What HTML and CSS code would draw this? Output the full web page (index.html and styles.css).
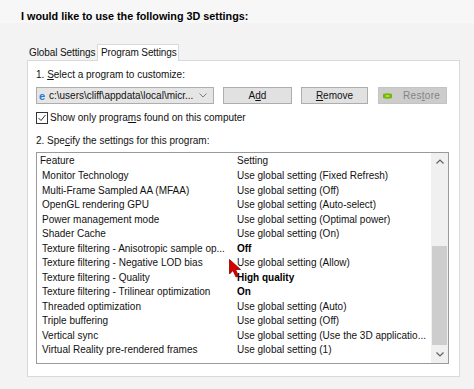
FILE: index.html
```html
<!DOCTYPE html>
<html lang="en">
<head>
    <meta charset="UTF-8">
    <meta name="viewport" content="width=device-width, initial-scale=1.0">
    <title>3D Settings</title>
    <link rel="stylesheet" href="styles.css">
</head>
<body>
    <div class="title">I would like to use the following 3D settings:</div>

    <div class="tabs">
        <div class="tab">Global Settings</div>
        <div class="tab active">Program Settings</div>
    </div>

    <div class="panel">
        <div class="label">1. <u>S</u>elect a program to customize:</div>

        <div class="program-row">
            <div class="select">
                <span class="ie">e</span>
                <span class="select-text">c:\users\cliff\appdata\local\micr...</span>
                <svg class="chevron" width="8" height="5" viewBox="0 0 8 5">
                    <path d="M0.5 0.5 L4 4 L7.5 0.5" fill="none" stroke="#7a7a7a" stroke-width="1"/>
                </svg>
            </div>
            <button class="btn add">A<u>d</u>d</button>
            <button class="btn remove"><u>R</u>emove</button>
            <button class="btn restore" disabled>
                <svg class="nv" width="9" height="6" viewBox="0 0 9 6">
                    <path d="M0 1 Q4.5 -0.5 9 1 L9 5 Q4.5 6.5 0 5 Z" fill="#76b900"/>
                    <path d="M2 3 Q4.5 1.5 7 3 Q4.5 4.5 2 3 Z" fill="#cfe89a"/>
                </svg>
                Res<u>t</u>ore
            </button>
        </div>

        <label class="check-row">
            <span class="checkbox">
                <svg width="10" height="10" viewBox="0 0 10 10">
                    <path d="M1.5 5 L4 7.5 L8.5 2" fill="none" stroke="#333" stroke-width="1"/>
                </svg>
            </span>
            Show only progra<u>m</u>s found on this computer
        </label>

        <div class="label second">2. Spe<u>c</u>ify the settings for this program:</div>

        <div class="list">
            <div class="list-body">
                <div class="list-head">
                    <span>Feature</span>
                    <span>Setting</span>
                </div>
                <div class="list-row"><span>Monitor Technology</span><span>Use global setting (Fixed Refresh)</span></div>
                <div class="list-row"><span>Multi-Frame Sampled AA (MFAA)</span><span>Use global setting (Off)</span></div>
                <div class="list-row"><span>OpenGL rendering GPU</span><span>Use global setting (Auto-select)</span></div>
                <div class="list-row"><span>Power management mode</span><span>Use global setting (Optimal power)</span></div>
                <div class="list-row"><span>Shader Cache</span><span>Use global setting (On)</span></div>
                <div class="list-row"><span>Texture filtering - Anisotropic sample op...</span><span class="set">Off</span></div>
                <div class="list-row"><span>Texture filtering - Negative LOD bias</span><span>Use global setting (Allow)</span></div>
                <div class="list-row"><span>Texture filtering - Quality</span><span class="set">High quality</span></div>
                <div class="list-row"><span>Texture filtering - Trilinear optimization</span><span class="set">On</span></div>
                <div class="list-row"><span>Threaded optimization</span><span>Use global setting (Auto)</span></div>
                <div class="list-row"><span>Triple buffering</span><span>Use global setting (Off)</span></div>
                <div class="list-row"><span>Vertical sync</span><span>Use global setting (Use the 3D applicatio...</span></div>
                <div class="list-row"><span>Virtual Reality pre-rendered frames</span><span>Use global setting (1)</span></div>
            </div>
            <div class="scrollbar">
                <div class="scroll-btn">
                    <svg width="8" height="5" viewBox="0 0 8 5">
                        <path d="M0.5 4.5 L4 1 L7.5 4.5" fill="none" stroke="#606060" stroke-width="1.2"/>
                    </svg>
                </div>
                <div class="scroll-track">
                    <div class="scroll-thumb"></div>
                </div>
                <div class="scroll-btn">
                    <svg width="8" height="5" viewBox="0 0 8 5">
                        <path d="M0.5 0.5 L4 4 L7.5 0.5" fill="none" stroke="#606060" stroke-width="1.2"/>
                    </svg>
                </div>
            </div>
        </div>
    </div>

    <!-- mouse pointer over the list -->
    <svg class="cursor" width="13" height="19" viewBox="0 0 13 19">
        <path d="M0.5 0.5 L0.5 15 L4 11.5 L7 18 L9.5 17 L6.5 10.5 L11.5 10.5 Z" fill="#d40000" stroke="#8a0000" stroke-width="0.8"/>
    </svg>
</body>
</html>
```

FILE: styles.css
```css
* {
    margin: 0;
    padding: 0;
    box-sizing: border-box;
}

body {
    font-family: "Liberation Sans", Arial, sans-serif;
    font-size: 10px;
    color: #111;
    background: #f3f3f3;
    width: 474px;
    height: 389px;
    position: relative;
    overflow: hidden;
}

.title {
    font-size: 10.8px;
    font-weight: bold;
    line-height: 14px;
    padding: 9px 0 0 21px;
    height: 23px;
    background: #f7f7f7;
    color: #000;
}

.tabs {
    display: flex;
    align-items: flex-end;
    margin: 21px 0 0 28px;
    height: 16px;
    position: relative;
    z-index: 1;
    white-space: nowrap;
}

.tab {
    height: 14px;
    line-height: 13px;
    width: 69px;
    padding-left: 1px;
    letter-spacing: -0.1px;
}

.tab.active {
    height: 17px;
    width: 82px;
    margin-bottom: -1px;
    padding-left: 3px;
    line-height: 15px;
    background: #fff;
    border: 1px solid #d9d9d9;
    border-bottom: none;
}

.panel {
    margin-left: 27px;
    width: 433px;
    height: 317px;
    background: #fff;
    border: 1px solid #d9d9d9;
    padding: 7px 0 0 8px;
}

.label {
    line-height: 14px;
    height: 14px;
}

.label.second {
    margin-top: 9px;
}

.program-row {
    display: flex;
    margin-top: 5px;
    height: 17px;
}

.select {
    width: 178px;
    height: 17px;
    background: #e5e5e5;
    border: 1px solid #adadad;
    display: flex;
    align-items: center;
    padding-left: 2px;
}

.ie {
    color: #1e7ad6;
    font-weight: bold;
    font-size: 11px;
    width: 10px;
    line-height: 12px;
}

.select-text {
    flex: 1;
    white-space: nowrap;
}

.chevron {
    margin-right: 6px;
}

.btn {
    font-family: inherit;
    font-size: 10px;
    color: #111;
    height: 17px;
    background: #e1e1e1;
    border: 1px solid #adadad;
    display: flex;
    align-items: center;
    justify-content: center;
}

.add {
    width: 69px;
    margin-left: 9px;
}

.remove {
    width: 67px;
    margin-left: 9px;
}

.restore {
    width: 69px;
    margin-left: 10px;
    background: #cccccc;
    border-color: #c4c4c4;
    color: #848484;
    justify-content: flex-start;
    padding-left: 4px;
    letter-spacing: 0.3px;
}

.nv {
    margin-right: 11px;
}

.check-row {
    display: flex;
    align-items: center;
    margin-top: 7px;
    height: 14px;
    line-height: 14px;
}

.checkbox {
    width: 12px;
    height: 12px;
    border: 1px solid #333;
    background: #fff;
    margin-right: 2px;
    display: flex;
    align-items: center;
    justify-content: center;
}

.list {
    margin-top: 4px;
    width: 413px;
    height: 212px;
    border: 1px solid #9a9a9a;
    display: flex;
}

.list-body {
    flex: 1;
    overflow: hidden;
}

.list-head,
.list-row {
    display: grid;
    grid-template-columns: 196px 1fr;
    white-space: nowrap;
}

.list-head {
    height: 16px;
    line-height: 16px;
}

.list-head span:first-child {
    padding-left: 3px;
}

.list-head span:last-child {
    padding-left: 4px;
}

.list-row {
    height: 14.5px;
    line-height: 14.5px;
}

.list-row span:first-child {
    padding-left: 5px;
}

.list-row span:last-child {
    padding-left: 4px;
    overflow: hidden;
}

.list-row .set {
    font-weight: bold;
    color: #000;
}

.scrollbar {
    width: 17px;
    background: #f0f0f0;
    display: flex;
    flex-direction: column;
}

.scroll-btn {
    height: 17px;
    display: flex;
    align-items: center;
    justify-content: center;
}

.scroll-track {
    flex: 1;
    padding: 76px 1px 0;
}

.scroll-thumb {
    height: 99px;
    background: #cdcdcd;
}

.cursor {
    position: absolute;
    left: 229px;
    top: 259px;
}
```
